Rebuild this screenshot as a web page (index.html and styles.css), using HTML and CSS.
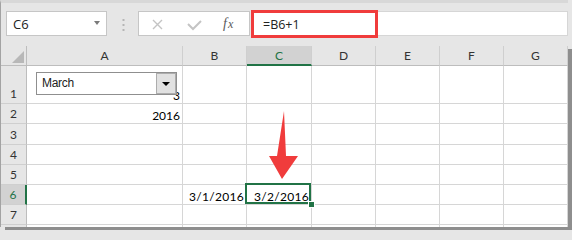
FILE: index.html
```html
<!DOCTYPE html>
<html>
<head>
<meta charset="utf-8">
<link rel="stylesheet" href="styles.css">
</head>
<body>
<div class="window">
  <div class="ribbon">
    <div class="namebox"><span>C6</span><span class="caret"></span></div>
    <div class="grip">
      <svg width="3" height="13" viewBox="0 0 3 13"><rect x="0.5" y="0" width="2" height="2" fill="#b5b5b5"/><rect x="0.5" y="5" width="2" height="2" fill="#b5b5b5"/><rect x="0.5" y="10" width="2" height="2" fill="#b5b5b5"/></svg>
    </div>
    <div class="fbtns">
      <svg class="ic-x" width="11" height="11" viewBox="0 0 11 11"><path d="M1 1 L10 10 M10 1 L1 10" stroke="#c4c4c4" stroke-width="1.4" fill="none"/></svg>
      <svg class="ic-ok" width="15" height="11" viewBox="0 0 15 11"><path d="M1 4 L6 9 L14 1" stroke="#c4c4c4" stroke-width="2" fill="none"/></svg>
      <span class="fx"><i>f</i><i class="fx-x">x</i></span>
    </div>
    <div class="fbar"><div class="fbox">=B6+1</div></div>
  </div>
  <div class="sheet">
    <div class="cn"><svg width="26" height="19" viewBox="0 0 26 19"><polygon points="11,17 23,17 23,5" fill="#b8b8b8"/></svg></div>
    <div class="ch">A</div><div class="ch">B</div><div class="ch sel">C</div><div class="ch">D</div><div class="ch">E</div><div class="ch">F</div><div class="ch">G</div>

    <div class="rh">1</div>
    <div class="cell a1">3
      <div class="combo"><span class="combo-text">March</span><span class="combo-btn"><span class="tri"></span></span></div>
    </div>
    <div class="cell"></div><div class="cell"></div><div class="cell"></div><div class="cell"></div><div class="cell"></div><div class="cell"></div>

    <div class="rh">2</div>
    <div class="cell">2016</div>
    <div class="cell"></div><div class="cell"></div><div class="cell"></div><div class="cell"></div><div class="cell"></div><div class="cell"></div>

    <div class="rh">3</div>
    <div class="cell"></div><div class="cell"></div><div class="cell"></div><div class="cell"></div><div class="cell"></div><div class="cell"></div><div class="cell"></div>

    <div class="rh">4</div>
    <div class="cell"></div><div class="cell"></div><div class="cell"></div><div class="cell"></div><div class="cell"></div><div class="cell"></div><div class="cell"></div>

    <div class="rh">5</div>
    <div class="cell"></div><div class="cell"></div><div class="cell"></div><div class="cell"></div><div class="cell"></div><div class="cell"></div><div class="cell"></div>

    <div class="rh sel">6</div>
    <div class="cell"></div>
    <div class="cell date">3/1/2016</div>
    <div class="cell date active">3/2/2016<span class="handle"></span></div>
    <div class="cell"></div><div class="cell"></div><div class="cell"></div><div class="cell"></div>

    <div class="rh">7</div>
    <div class="cell"></div><div class="cell"></div><div class="cell"></div><div class="cell"></div><div class="cell"></div><div class="cell"></div><div class="cell"></div>

    <div class="rh"></div>
    <div class="cell"></div><div class="cell"></div><div class="cell"></div><div class="cell"></div><div class="cell"></div><div class="cell"></div><div class="cell"></div>
  </div>
</div>
<svg class="arrow" width="36" height="74" viewBox="0 0 36 74"><polygon points="18,3 20,48 32,48 16,71 3,48 11,48" fill="#f03c3c"/></svg>
</body>
</html>
```

FILE: styles.css
```css
body {
  margin: 0;
  width: 572px;
  height: 230px;
  overflow: hidden;
  background: #e6e6e6;
  position: relative;
  font-family: "Lato", "Liberation Sans", sans-serif;
}

.window {
  width: 568px;
  box-sizing: border-box;
  border-top: 3px solid #d8d8d8;
  border-left: 1px solid #a3a3a3;
}

.ribbon {
  height: 43px;
  box-sizing: border-box;
  padding-top: 8px;
  display: flex;
  align-items: flex-start;
}

.namebox {
  margin-left: 5px;
  width: 101px;
  height: 25px;
  box-sizing: border-box;
  border: 1px solid #c6c6c6;
  background: #fff;
  display: flex;
  align-items: center;
  justify-content: space-between;
  padding: 0 6px;
  font: 13px "Open Sans", sans-serif;
  color: #222;
}

.caret {
  width: 0;
  height: 0;
  border-left: 3.5px solid transparent;
  border-right: 3.5px solid transparent;
  border-top: 4px solid #7a7a7a;
  margin-top: -2px;
}

.grip {
  width: 31px;
  display: flex;
  justify-content: center;
  padding-top: 8px;
  padding-left: 2px;
  box-sizing: border-box;
}

.fbtns {
  width: 112px;
  height: 25px;
  box-sizing: border-box;
  border: 1px solid #c6c6c6;
  background: #fff;
  display: flex;
  align-items: flex-start;
  padding-left: 13px;
}

.ic-x { margin-top: 7px; }
.ic-ok { margin-top: 8px; margin-left: 24px; }

.fx {
  margin-left: 21px;
  font-family: "Liberation Serif", serif;
  font-size: 14px;
  line-height: 23px;
  color: #5a5a5a;
}
.fx i { font-style: italic; }
.fx-x { font-size: 12px; margin-left: 1px; }

.fbar {
  flex: 1;
  height: 25px;
  box-sizing: border-box;
  margin-left: 1px;
  background: #fff;
  border: 1px solid #d6d6d6;
  border-left: 0;
  display: flex;
  align-items: flex-start;
}

.fbox {
  width: 127px;
  height: 28px;
  box-sizing: border-box;
  border: 3px solid #f03c3c;
  margin-top: -2px;
  padding-left: 9px;
  display: flex;
  align-items: center;
  font: 12.5px "Open Sans", sans-serif;
  color: #222;
}

.sheet {
  display: grid;
  grid-template-columns: 26px 156px 64px 65px 64px 64px 64px 64px;
  grid-template-rows: 20px 38px 20px 21px 20px 20px 20px 20px 20px;
  height: 181px;
  overflow: hidden;
  background: #fff;
  box-shadow: 4px 3px 0 #8e8e8e;
}

.cn {
  background: #e6e6e6;
  border-right: 1px solid #bdbdbd;
  border-bottom: 1px solid #bdbdbd;
}
.cn svg { display: block; }

.ch {
  background: #e6e6e6;
  border-right: 1px solid #cfcfcf;
  border-bottom: 1px solid #bdbdbd;
  display: flex;
  align-items: center;
  justify-content: center;
  padding-top: 1px;
  font-size: 12px;
  line-height: 14px;
  color: #333;
}
.ch.sel {
  background: #d2d2d2;
  color: #217346;
  border-bottom: 2px solid #217346;
}

.rh {
  background: #e6e6e6;
  border-right: 1px solid #bdbdbd;
  border-bottom: 1px solid #cfcfcf;
  display: flex;
  align-items: flex-end;
  justify-content: center;
  padding-bottom: 2px;
  font-size: 12px;
  line-height: 14px;
  color: #333;
}
.rh.sel {
  background: #d2d2d2;
  color: #217346;
  border-right: 2px solid #217346;
}

.cell {
  border-right: 1px solid #d6d6d6;
  border-bottom: 1px solid #d6d6d6;
  display: flex;
  align-items: flex-end;
  justify-content: flex-end;
  padding-right: 2px;
  font-size: 12px;
  line-height: 14px;
  color: #000;
}

.date { letter-spacing: 0.3px; }

.a1 { position: relative; }

.combo {
  position: absolute;
  left: 9px;
  top: 6px;
  width: 141px;
  height: 23px;
  box-sizing: border-box;
  border: 1px solid #8f8f8f;
  background: #fff;
  display: flex;
  letter-spacing: 0;
}
.combo-text {
  flex: 1;
  padding-left: 5px;
  font: 12px "Liberation Sans", sans-serif;
  letter-spacing: -0.3px;
  line-height: 21px;
  color: #222;
}
.combo-btn {
  width: 20px;
  background: #e1e1e1;
  border: 1px solid #adadad;
  box-sizing: border-box;
  display: flex;
  align-items: center;
  justify-content: center;
}
.tri {
  width: 0;
  height: 0;
  border-left: 4px solid transparent;
  border-right: 4px solid transparent;
  border-top: 4px solid #000;
}

.active { position: relative; }
.active::after {
  content: "";
  position: absolute;
  left: -2px;
  top: -2px;
  right: 0;
  bottom: 0;
  border: 2px solid #217346;
}
.handle {
  position: absolute;
  right: -3px;
  bottom: -3px;
  width: 5px;
  height: 5px;
  background: #217346;
  outline: 1px solid #fff;
  z-index: 2;
}

.arrow {
  position: absolute;
  left: 266px;
  top: 108px;
}
```
